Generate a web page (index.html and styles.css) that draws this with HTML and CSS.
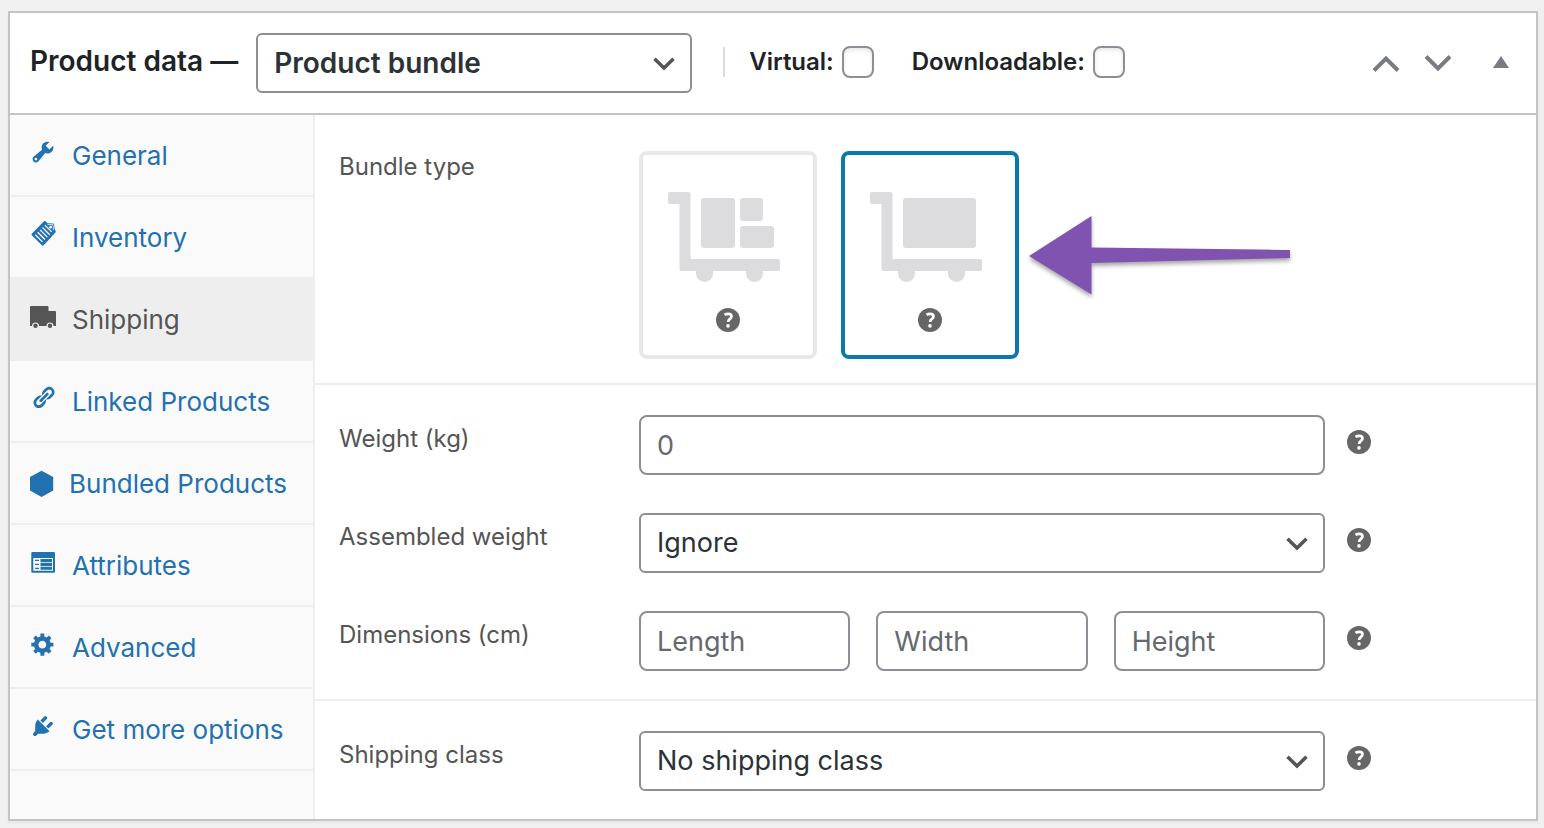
FILE: index.html
```html
<!DOCTYPE html>
<html lang="en">
<head>
<meta charset="utf-8">
<meta name="viewport" content="width=device-width, initial-scale=1">
<title>Product data</title>
<link rel="stylesheet" href="styles.css">
</head>
<body>
<svg class="sprite" aria-hidden="true">
  <symbol id="chevron" viewBox="0 0 22 14"><path d="M1.500 1.800 11 11l9.500-9.200"/></symbol>
  <symbol id="help" viewBox="0 0 24 24">
    <circle cx="12" cy="12" r="12" fill="#666"/>
    <path d="M8.500 6.900c1.200-.8 2.400-1.100 3.700-1.100 2 0 3.300.9 3.300 2.500 0 2.700-3.400 2.500-3.400 5.600" fill="none" stroke="#fff" stroke-width="2.700"/>
    <circle cx="12" cy="17.900" r="1.800" fill="#fff"/>
  </symbol>
  <symbol id="cart" viewBox="0 0 112 90">
    <path d="M2 0h18.500a2 2 0 0 1 2 2v65H110a2 2 0 0 1 2 2v8a2 2 0 0 1-2 2H95v2.500a8.500 8.500 0 0 1-17 0V79H45v2.500a8.500 8.500 0 0 1-17 0V79H13.500a2 2 0 0 1-2-2V12H2a2 2 0 0 1-2-2V2a2 2 0 0 1 2-2z"/>
  </symbol>
</svg>

<section class="panel">
  <header class="panel-header">
    <h2 class="title">Product data —</h2>
    <div class="select-wrap type-select">
      <select class="control select strong" aria-label="Product type"><option>Product bundle</option></select>
      <svg class="select-arrow"><use href="#chevron"/></svg>
    </div>
    <div class="flags">
      <label class="flag">Virtual:<input class="check" type="checkbox"></label>
      <label class="flag">Downloadable:<input class="check" type="checkbox"></label>
    </div>
    <div class="order-actions">
      <button class="icon-button" type="button" aria-label="Move up"><svg viewBox="0 0 28 18"><path class="line" d="M2 16.500 14 4.500l12 12"/></svg></button>
      <button class="icon-button" type="button" aria-label="Move down"><svg viewBox="0 0 28 18"><path class="line" d="M2 2.500 14 14.500l12-12"/></svg></button>
      <button class="icon-button toggle" type="button" aria-label="Toggle panel"><svg viewBox="0 0 16 18"><path d="M8 2l8 12H0z"/></svg></button>
    </div>
  </header>

  <div class="panel-body">
    <nav class="tabs" aria-label="Product data sections">
      <a class="tab" href="#general"><svg class="tab-icon" viewBox="0 0 28 28"><path transform="translate(0 -2) scale(1.3)" d="M16.680 9.770c-1.340 1.340-3.300 1.670-4.950.99l-5.410 6.520c-.99.99-2.590.99-3.580 0s-.99-2.590 0-3.570l6.520-5.420c-.68-1.650-.35-3.610.99-4.950 1.280-1.280 3.120-1.620 4.720-1.060l-2.890 2.890 2.820 2.820 2.860-2.870c.53 1.580.18 3.390-1.080 4.650zM3.810 16.210c.4.39 1.040.39 1.430 0 .4-.4.4-1.040 0-1.430-.39-.4-1.030-.4-1.430 0-.39.39-.39 1.030 0 1.430z"/></svg>General</a>
      <a class="tab" href="#inventory"><svg class="tab-icon" viewBox="0 0 28 28">
        <path d="M2 10.500 14 -1.700q.8-.7 1.600 0L17.500 .200 23 .500q1 0 1.100 1l.5 4.500 1 2q.5.800-.2 1.500L13.700 22.300q-.9.900-1.800 0L2 12.500q-1-1 0-2z"/>
        <g fill="none" stroke="#fafafa" stroke-width="1.300"><path d="M5.300 11.700l7.200 7.200M7.700 9.300l7.200 7.200M10.100 6.900l7.200 7.200M12.500 4.500l7.200 7.200M14.900 2.100l6.800 6.800"/><path stroke-width=".8" d="M17.500 1.500l5.500.2.400 5.500"/></g>
        <circle cx="20.600" cy="4.200" r="1.400" fill="#fafafa"/>
      </svg>Inventory</a>
      <a class="tab active" href="#shipping" aria-current="page"><svg class="tab-icon" viewBox="0 0 28 28">
        <path d="M1 1h16.500q1 0 1 1v4H25q1 0 1 1v14h-2.500a3.500 3.500 0 0 0-7 0H9a3.500 3.500 0 0 0-7 0H0V2q0-1 1-1z"/><circle cx="5.500" cy="20.800" r="2.200"/><circle cx="20" cy="20.800" r="2.200"/>
      </svg>Shipping</a>
      <a class="tab" href="#linked"><svg class="tab-icon" viewBox="0 0 28 28"><path transform="translate(1 -2) scale(1.240)" d="M17.740 2.760c1.680 1.690 1.680 4.410 0 6.100l-1.530 1.520c-1.120 1.120-2.700 1.470-4.140 1.090l2.620-2.610.76-.77.76-.76c.84-.84.84-2.200 0-3.040-.84-.85-2.200-.85-3.040 0l-.77.76-3.380 3.380c-.37-1.440-.02-3.020 1.100-4.140l1.520-1.530c1.690-1.680 4.420-1.680 6.100 0zM8.590 13.430l5.340-5.340c.42-.42.42-1.100 0-1.520-.44-.43-1.130-.39-1.530 0l-5.330 5.340c-.42.42-.42 1.100 0 1.520.44.43 1.130.39 1.520 0zm-.76 2.290l4.140-4.150c.38 1.440.03 3.020-1.090 4.140l-1.520 1.530c-1.690 1.680-4.410 1.680-6.100 0-1.680-1.680-1.680-4.420 0-6.100l1.530-1.520c1.120-1.120 2.700-1.470 4.140-1.100l-4.140 4.150c-.85.84-.85 2.200 0 3.050.84.84 2.200.84 3.040 0z"/></svg>Linked Products</a>
      <a class="tab" href="#bundled"><svg class="tab-icon narrow" viewBox="0 0 25 28"><path d="M11.600 1.800 23.200 8v13.500l-11.600 6.600L0 21.500V8z"/></svg>Bundled Products</a>
      <a class="tab" href="#attributes"><svg class="tab-icon" viewBox="0 0 28 28">
        <path fill-rule="evenodd" d="M2.300 1H24q1 0 1 1v18.700q0 1-1 1H2.300q-1 0-1-1V2q0-1 1-1zM3.300 7v12.700H23V7z"/>
        <path d="M5 8.700h4v1.300H5zM5 12.700h4V14H5zM5 16.700h4V18H5zM10.500 8h11.500v3.200H10.500zM10.500 12h11.500v3H10.500zM10.500 15.800h11.500v3H10.500z"/>
      </svg>Attributes</a>
      <a class="tab" href="#advanced"><svg class="tab-icon" viewBox="0 0 28 28"><path transform="translate(0 -2) scale(1.300)" d="M18 12h-2.180c-.17.7-.44 1.350-.81 1.930l1.540 1.540-2.100 2.100-1.540-1.540c-.58.36-1.230.63-1.910.79V19H8v-2.180c-.68-.16-1.330-.43-1.910-.79l-1.540 1.540-2.120-2.120 1.540-1.540c-.36-.58-.63-1.230-.79-1.910H1V9.030h2.170c.16-.7.44-1.350.8-1.940L2.430 5.550l2.100-2.100 1.540 1.540c.58-.37 1.240-.64 1.930-.81V2h3v2.180c.68.16 1.330.43 1.910.79l1.540-1.540 2.120 2.120-1.540 1.540c.36.59.64 1.240.8 1.940H18V12zm-8.500 1.500c1.660 0 3-1.340 3-3s-1.340-3-3-3-3 1.340-3 3 1.340 3 3 3z"/></svg>Advanced</a>
      <a class="tab" href="#more"><svg class="tab-icon" viewBox="0 0 28 28"><path transform="translate(0 -2) scale(1.300)" d="M13.110 4.360L9.870 7.600 8 5.730l3.240-3.240c.35-.34 1.050-.2 1.560.32.52.51.66 1.210.31 1.550zm-8 1.770l.91-1.120 9.010 9.010-1.190.84c-.71.71-2.630 1.160-3.820 1.160H6.140L4.900 17.260c-.59.59-1.540.59-2.120 0-.59-.58-.59-1.530 0-2.120l1.240-1.240v-3.880c0-1.130.4-3.190 1.090-3.890zm7.260 3.970l3.240-3.240c.34-.35 1.040-.21 1.550.31.52.51.66 1.210.31 1.550l-3.240 3.250z"/></svg>Get more options</a>
    </nav>

    <div class="fields">
      <div class="group bundle-group">
        <div class="row">
          <span class="label" id="bundle-label">Bundle type</span>
          <div class="bundle-types" role="radiogroup" aria-labelledby="bundle-label">
            <label class="bundle-card">
              <input class="bundle-radio" type="radio" name="bundle" aria-label="Unassembled">
              <svg class="cart" viewBox="0 0 120 90"><use href="#cart" width="112" height="90"/><rect x="33" y="6" width="34" height="50" rx="3"/><rect x="72" y="6" width="23" height="23" rx="3"/><rect x="72" y="34" width="34" height="22" rx="3"/></svg>
              <svg class="help"><use href="#help"/></svg>
            </label>
            <label class="bundle-card">
              <input class="bundle-radio" type="radio" name="bundle" aria-label="Assembled" checked>
              <svg class="cart" viewBox="0 0 120 90"><use href="#cart" width="112" height="90"/><rect x="33" y="6" width="73" height="50" rx="3"/></svg>
              <svg class="help"><use href="#help"/></svg>
            </label>
            <svg class="pointer" viewBox="0 0 262 80" aria-hidden="true"><path d="M0 41 62.500 1v31.500L261 35v8L62.500 48v31.500z"/></svg>
          </div>
        </div>
      </div>

      <div class="group">
        <div class="row">
          <label class="label" for="weight">Weight (kg)</label>
          <input class="control" id="weight" type="text" placeholder="0">
          <svg class="help"><use href="#help"/></svg>
        </div>
        <div class="row">
          <label class="label" for="assembled">Assembled weight</label>
          <div class="select-wrap">
            <select class="control select" id="assembled"><option>Ignore</option></select>
            <svg class="select-arrow"><use href="#chevron"/></svg>
          </div>
          <svg class="help"><use href="#help"/></svg>
        </div>
        <div class="row">
          <label class="label" for="length">Dimensions (cm)</label>
          <div class="dimensions">
            <input class="control" id="length" type="text" placeholder="Length">
            <input class="control" type="text" placeholder="Width" aria-label="Width">
            <input class="control" type="text" placeholder="Height" aria-label="Height">
          </div>
          <svg class="help"><use href="#help"/></svg>
        </div>
      </div>

      <div class="group">
        <div class="row">
          <label class="label" for="class">Shipping class</label>
          <div class="select-wrap">
            <select class="control select" id="class"><option>No shipping class</option></select>
            <svg class="select-arrow"><use href="#chevron"/></svg>
          </div>
          <svg class="help"><use href="#help"/></svg>
        </div>
      </div>
    </div>
  </div>
</section>
</body>
</html>
```
FILE: styles.css
```css
* { box-sizing: border-box; }

body {
  margin: 0;
  padding: 11px 6px 7px 8px;
  background: #f0f0f1;
  color: #1d2327;
  font-family: Inter, "Liberation Sans", sans-serif;
  font-size: 26px;
}

.sprite { position: absolute; width: 0; height: 0; }

.panel {
  background: #fff;
  border: 2px solid #c3c4c7;
  box-shadow: 0 2px 2px rgba(0, 0, 0, .04);
}

.panel-header {
  display: flex;
  align-items: center;
  min-height: 102px;
  padding: 0 24px 0 20px;
  border-bottom: 2px solid #c3c4c7;
}

.title {
  margin: 0 18px 0 0;
  padding-bottom: 4px;
  font-size: 28px;
  line-height: 36px;
  font-weight: 600;
  white-space: nowrap;
}

.control {
  display: block;
  width: 100%;
  min-width: 0;
  height: 60px;
  margin: 0;
  padding: 0 16px;
  border: 2px solid #8c8f94;
  border-radius: 8px;
  background: #fff;
  color: #2c3338;
  font: 400 27px/36px Inter, "Liberation Sans", sans-serif;
}

.control::placeholder { color: #646970; opacity: 1; }

.select { appearance: none; padding-right: 48px; border-radius: 6px; }
.strong { font-weight: 600; font-size: 28px; }

.select-wrap { position: relative; }
.type-select { width: 436px; }

.select-arrow {
  position: absolute;
  top: 24px;
  right: 17px;
  width: 22px;
  height: 14px;
  fill: none;
  stroke: #555;
  stroke-width: 3.5;
  pointer-events: none;
}

.flags {
  display: flex;
  gap: 38px;
  margin: 0 0 2px 31px;
  padding-left: 24px;
  border-left: 2px solid #dcdcde;
  line-height: 30px;
}

.flag {
  display: flex;
  align-items: center;
  gap: 8px;
  height: 30px;
  font-size: 24px;
  font-weight: 600;
}

.check {
  appearance: none;
  flex: none;
  width: 32px;
  height: 32px;
  margin: 0;
  border: 2px solid #8c8f94;
  border-radius: 8px;
  background: #fff;
  box-shadow: inset 0 2px 4px rgba(0, 0, 0, .1);
}

.order-actions { display: flex; align-items: center; gap: 24px; margin-left: auto; }

.icon-button { padding: 0; border: 0; background: none; }
.icon-button svg { display: block; height: 18px; width: 28px; fill: #787c82; }
.icon-button .line { fill: none; stroke: #787c82; stroke-width: 4; }
.toggle { margin: 0 3px 0 17px; }
.toggle svg { width: 16px; }

.panel-body { display: grid; grid-template-columns: 305px minmax(0, 1fr); }

.tabs { background: #fafafa; border-right: 2px solid #eee; }

.tab {
  display: flex;
  align-items: center;
  gap: 14px;
  min-height: 82px;
  padding-left: 20px;
  border-bottom: 2px solid #eee;
  color: #2271b1;
  text-decoration: none;
  white-space: nowrap;
}

.tab.active { background: #eee; color: #555; }

.tab-icon { flex: none; width: 28px; height: 28px; fill: currentColor; overflow: visible; }
.tab-icon.narrow { width: 25px; }

.group {
  display: grid;
  gap: 38px;
  padding: 30px 0 28px 24px;
  border-bottom: 2px solid #eee;
}

.group:last-child { border-bottom: 0; }
.bundle-group { padding: 36px 0 24px 24px; }

.row {
  display: grid;
  grid-template-columns: 300px minmax(0, 13fr) minmax(0, 4fr);
  align-items: start;
}

.label { color: #555; font-size: 24px; line-height: 48px; }
.bundle-group .label { line-height: 32px; }

.help { width: 24px; height: 24px; }
.row > .help { margin: 15px 0 0 22px; }

.dimensions { display: grid; grid-template-columns: repeat(3, minmax(0, 1fr)); gap: 26px; }

.bundle-types { position: relative; display: flex; gap: 24px; }

.bundle-card {
  position: relative;
  display: flex;
  flex-direction: column;
  align-items: center;
  gap: 26px;
  width: 178px;
  height: 208px;
  padding-top: 37px;
  border: 4px solid #e8e8e8;
  border-radius: 8px;
}

.bundle-card:has(:checked) { border-color: #0a7aae; }

.bundle-radio { position: absolute; inset: 0; width: 100%; height: 100%; margin: 0; opacity: 0; }

.cart { width: 120px; height: 90px; fill: #dcdcde; }

.pointer {
  position: absolute;
  left: 390px;
  top: 64px;
  width: 262px;
  height: 80px;
  overflow: visible;
  fill: #8053b0;
  filter: drop-shadow(0 3px 2px rgba(0, 0, 0, .35));
}
```
